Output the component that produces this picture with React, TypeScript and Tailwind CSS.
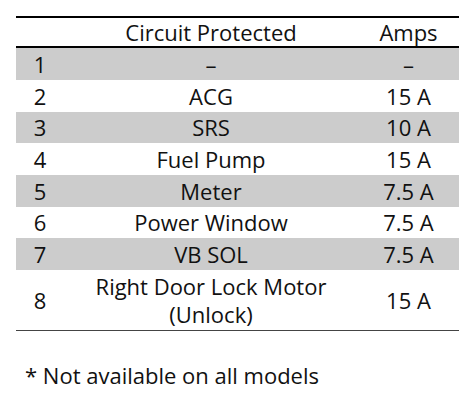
import React from 'react';

const rows = [
  { no: '1', circuit: '–', amps: '–' },
  { no: '2', circuit: 'ACG', amps: '15 A' },
  { no: '3', circuit: 'SRS', amps: '10 A' },
  { no: '4', circuit: 'Fuel Pump', amps: '15 A' },
  { no: '5', circuit: 'Meter', amps: '7.5 A' },
  { no: '6', circuit: 'Power Window', amps: '7.5 A' },
  { no: '7', circuit: 'VB SOL', amps: '7.5 A' },
];

const grid = 'grid grid-cols-[48px_294px_101px] items-center';

export default function App() {
  return (
    <div
      className="h-[413px] w-[474px] overflow-hidden bg-white text-[22px] leading-[28px] text-[#111]"
      style={{ fontFamily: '"Open Sans", "Liberation Sans", sans-serif' }}
    >
      <div className="px-4 pt-4">
        <div className="w-[443px] border-t-2 border-black">
          <div className={`${grid} h-[30.3px] border-b-2 border-black pb-[3px]`}>
            <span />
            <span className="text-center">Circuit Protected</span>
            <span className="text-center">Amps</span>
          </div>
          {rows.map((r, i) => (
            <div
              key={r.no}
              className={`${grid} h-[31.67px] ${i % 2 === 0 ? 'bg-[#cccccc]' : 'bg-white'}`}
            >
              <span className="text-center">{r.no}</span>
              <span className="text-center">{r.circuit}</span>
              <span className="text-center">{r.amps}</span>
            </div>
          ))}
          <div className={`${grid} h-[60.7px] border-b border-[#444]`}>
            <span className="text-center">8</span>
            <span className="text-center leading-[28px]">
              Right Door Lock Motor
              <br />
              (Unlock)
            </span>
            <span className="text-center">15 A</span>
          </div>
        </div>
      </div>
      <p className="mt-[30px] pl-[25px]">* Not available on all models</p>
    </div>
  );
}
